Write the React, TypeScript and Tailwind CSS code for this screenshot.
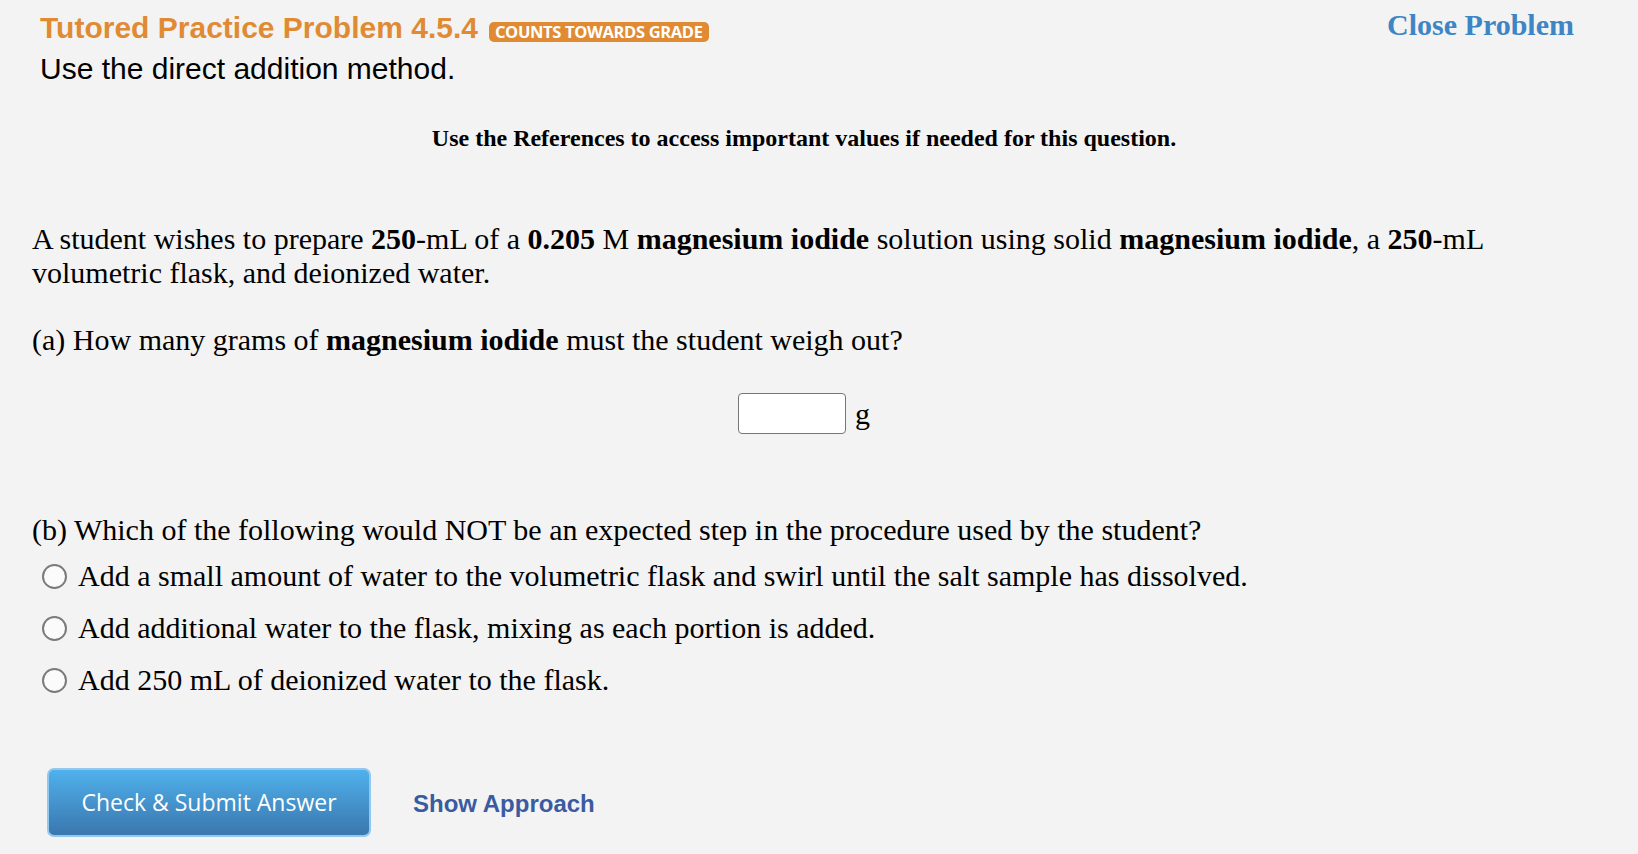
import React from "react";

const serif = "font-['Liberation_Serif','Times_New_Roman',serif]";
const sans = "font-['Liberation_Sans',Arial,sans-serif]";

function Radio() {
  return (
    <span className="inline-block w-[25px] h-[25px] rounded-full border-[2px] border-[#7b7b7b] bg-[#fbfbfb] shrink-0" />
  );
}

export default function App() {
  const options = [
    "Add a small amount of water to the volumetric flask and swirl until the salt sample has dissolved.",
    "Add additional water to the flask, mixing as each portion is added.",
    "Add 250 mL of deionized water to the flask.",
  ];
  return (
    <div className="min-h-screen w-full bg-[#f3f3f3] text-black">
      {/* Header */}
      <div className="flex items-start justify-between pl-[40px] pr-[64px] pt-[11px]">
        <div className="flex flex-col">
          <div className="flex items-baseline">
            <span className={`${sans} text-[30px] leading-[34px] font-bold text-[#e08b34]`}>
              Tutored Practice Problem 4.5.4
            </span>
            <span className="ml-[11px] inline-block rounded-[5px] bg-[#e08b34] px-[6px] font-['Open_Sans',Arial,sans-serif] text-[16.5px] leading-[20px] font-bold text-white tracking-[-0.35px]">
              COUNTS TOWARDS GRADE
            </span>
          </div>
          <div className={`${sans} mt-[7px] text-[30px] leading-[34px] text-black`}>
            Use the direct addition method.
          </div>
        </div>
        <a className={`${serif} -mt-[3px] text-[30px] leading-[34px] font-bold text-[#3d85c4] cursor-pointer`}>
          Close Problem
        </a>
      </div>

      {/* Content */}
      <div className={`${serif} pl-[32px] pr-[62px]`}>
        <div className="mt-[38px] text-center text-[24px] leading-[28px] font-bold">
          Use the References to access important values if needed for this question.
        </div>

        <p className="mt-[70px] text-[30px] leading-[34px]">
          A student wishes to prepare <b>250</b>-mL of a <b>0.205</b> M <b>magnesium iodide</b> solution using
          solid <b>magnesium iodide</b>, a <b>250</b>-mL volumetric flask, and deionized water.
        </p>

        <p className="mt-[33px] text-[30px] leading-[34px]">
          (a) How many grams of <b>magnesium iodide</b> must the student weigh out?
        </p>

        <div className="mt-[36px] flex items-center justify-center gap-[9px]">
          <input
            type="text"
            className="w-[108px] h-[41px] rounded-[4px] border-[1.5px] border-[#767676] bg-white outline-none"
          />
          <span className="text-[30px] leading-[34px]">g</span>
        </div>

        <p className="mt-[79px] text-[30px] leading-[34px]">
          (b) Which of the following would NOT be an expected step in the procedure used by the student?
        </p>

        <div className="mt-[12px] flex flex-col gap-[18px]">
          {options.map((o) => (
            <label key={o} className="flex items-center gap-[11px] pl-[10px] text-[30px] leading-[34px]">
              <Radio />
              <span>{o}</span>
            </label>
          ))}
        </div>

        <div className="mt-[71px] flex items-center pl-[15px]">
          <button className="w-[324px] h-[69px] rounded-[7px] border-[2px] border-[#92c7ee] bg-gradient-to-b from-[#50b1ec] to-[#3a77ae] font-['Open_Sans',Arial,sans-serif] text-[23px] text-white">
            Check &amp; Submit Answer
          </button>
          <a className={`${sans} ml-[42px] mt-[3px] text-[24px] font-bold text-[#3a5ba0] cursor-pointer`}>
            Show Approach
          </a>
        </div>
      </div>
    </div>
  );
}
